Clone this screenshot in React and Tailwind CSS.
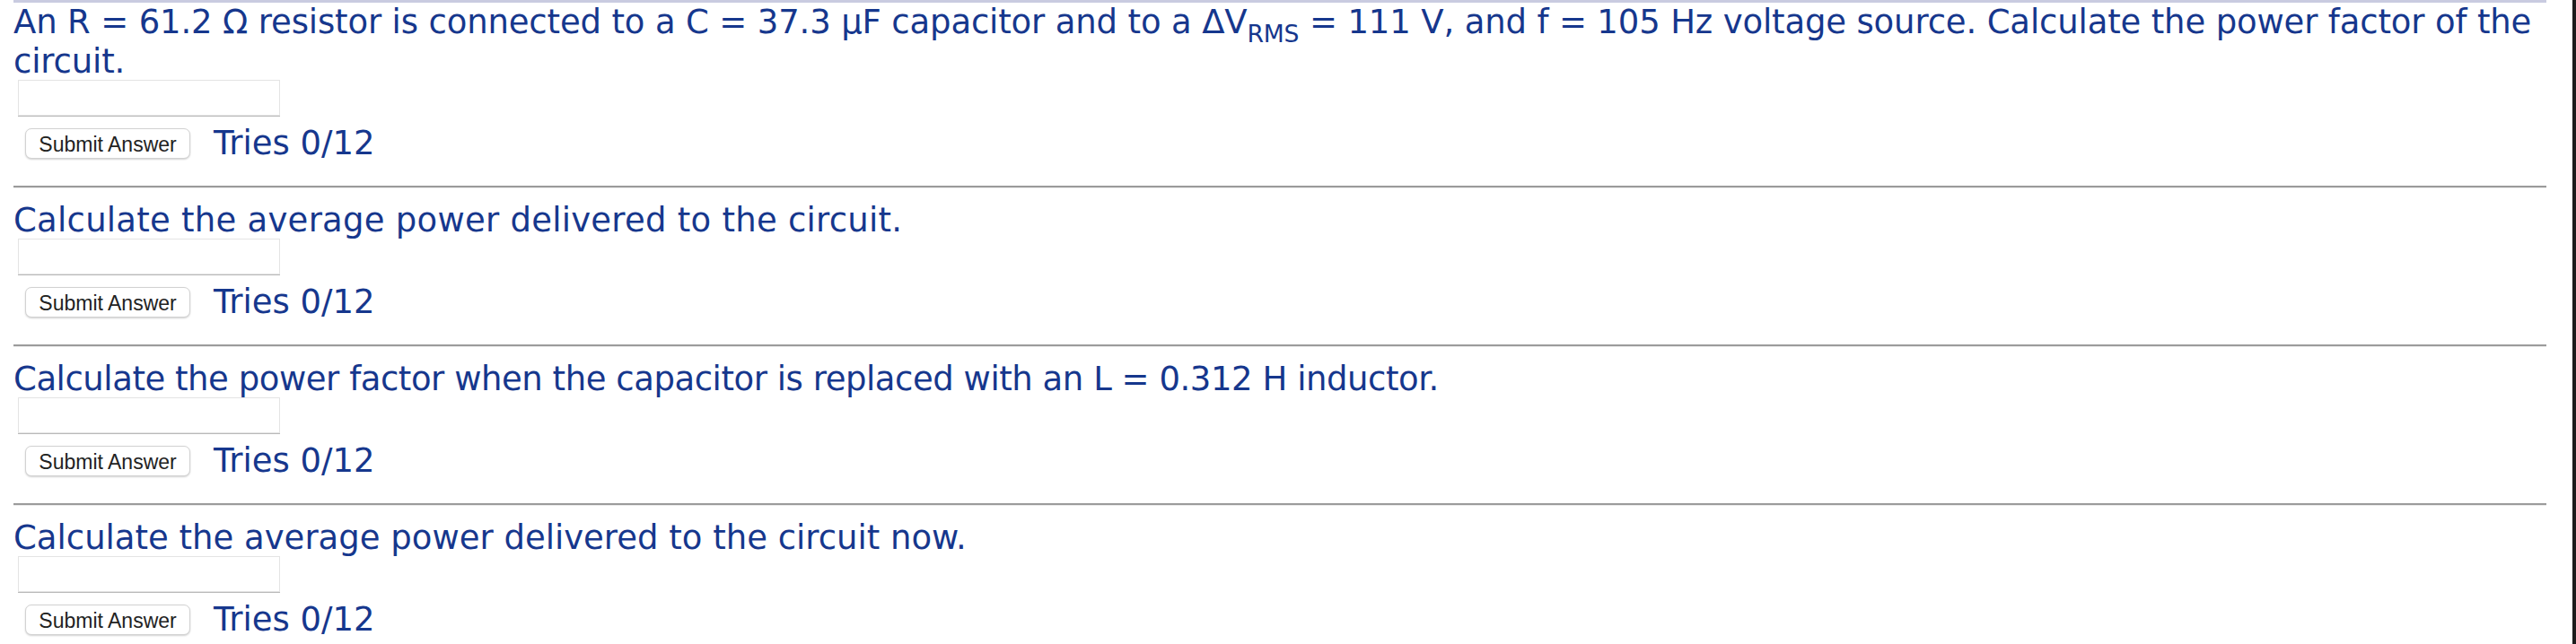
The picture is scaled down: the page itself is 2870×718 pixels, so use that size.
import React from "react";

const TEXT_FONT = "font-['DejaVu_Sans',Verdana,sans-serif]";

function Question({ children, tracking = "" }) {
  return (
    <div>
      <p className={`leading-[44px] ${tracking}`}>{children}</p>
      {/* answer box */}
      <input
        type="text"
        className="block -mt-0.5 ml-[5px] h-10 w-[292px] bg-white border border-[#e4e4e4] shadow-[0_1px_0_#b9b9b9] outline-none"
      />
      <div className="flex items-center mt-3.5 ml-[13px]">
        <button className="h-[34px] w-[184px] rounded-[7px] border border-[#d2d2d2] bg-white text-[23px] text-[#222] font-['Liberation_Sans',Arial,sans-serif] shadow-[0_1px_2px_rgba(0,0,0,0.18)]">
          Submit Answer
        </button>
        <span className="ml-[26px] leading-[34px]">Tries 0/12</span>
      </div>
    </div>
  );
}

function Rule() {
  return <div className="mt-[30px] mb-[14px] border-t-2 border-[#9b9b9b] border-b border-b-[#ececec]" />;
}

export default function App() {
  return (
    <div className="flex h-[718px] w-[2870px] bg-white">
      <main className={`flex-1 pl-[15px] pr-[29px] text-[37px] text-[#16378d] ${TEXT_FONT}`}>
        <div className="border-t-[3px] border-[#c9cbe0]">
          <Question tracking="tracking-[-0.15px]">
            An R = 61.2 Ω resistor is connected to a C = 37.3 μF capacitor and to a ΔV
            <sub className="text-[0.72em] bottom-[-0.38em]">RMS</sub> = 111 V, and f = 105 Hz
            voltage source. Calculate the power factor of the circuit.
          </Question>

          <Rule />
          <Question tracking="tracking-[0.25px]">
            Calculate the average power delivered to the circuit.
          </Question>

          <Rule />
          <Question tracking="tracking-[-0.45px]">
            Calculate the power factor when the capacitor is replaced with an L = 0.312 H inductor.
          </Question>

          <Rule />
          <Question>Calculate the average power delivered to the circuit now.</Question>
        </div>
      </main>
      <div className="w-[4px] bg-[#1c1c1c]" />
    </div>
  );
}
